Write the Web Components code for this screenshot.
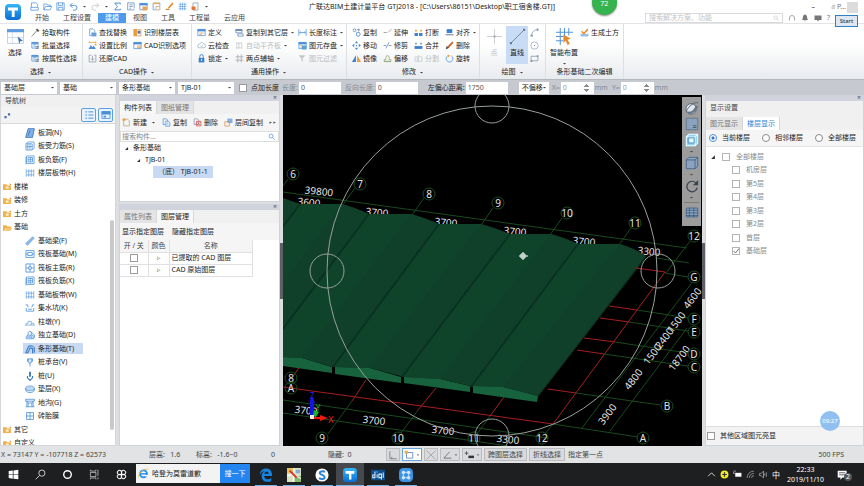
<!DOCTYPE html>
<html lang="zh-CN">
<head>
<meta charset="utf-8">
<title>广联达BIM土建计量平台 GTJ2018</title>
<style>
  html, body {
    margin: 0;
    height: 100%;
    overflow: hidden;
  }
  body {
    font: 7px/10px "Noto Sans", "Noto Sans CJK SC", sans-serif;
    color: #222;
    background: #f0f0f0;
  }
</style>
</head>
<body>
<gt-app></gt-app>

<script>
// Shared look of the native controls
const controls = `
  *, *::before, *::after { box-sizing: border-box; }
  button, input, select {
    font: inherit;
    color: inherit;
    margin: 0;
    padding: 0;
    border: 0;
    border-radius: 0;
    background: none;
    outline: none;
  }
  button { cursor: pointer; white-space: nowrap; }
  input[type=checkbox], input[type=radio] {
    appearance: none;
    flex: none;
    width: 8px;
    height: 8px;
    border: 1px solid #9a9a9a;
    background: #fff;
  }
  input[type=radio] { border-radius: 50%; border-color: #8a8a8a; }
  input[type=radio]:checked {
    border-color: #4a8fd8;
    background: radial-gradient(circle, #2f6fc0 0 1px, #fff 2px);
  }
  label { white-space: nowrap; }
  ul { list-style: none; margin: 0; padding: 0; }
`;

const B = '#4a8fd8';
const O = '#f09a35';
const s = (d, c = B, w = 1.3) => `<path d="${d}" fill="none" stroke="${c}" stroke-width="${w}"/>`;
const f = (d, c = B) => `<path d="${d}" fill="${c}"/>`;
const win = s('M1.5 2.5h13v11h-13z') + f('M1 2h14v4H1z');

const ICONS = {
  logo: `<defs><linearGradient id="g" x2="0" y2="1"><stop stop-color="#36b5f7"/><stop offset="1" stop-color="#0a6fd6"/></linearGradient></defs><rect width="16" height="16" rx="4" fill="url(#g)"/>` + f('M3 3.5h10v3H9.6V13H6.8V6.5H3z', '#fff'),
  caret: f('M3 6h10l-5 5z', '#444'),
  file: s('M2.5 1.5h8l3 3v4M2.5 1.5v8M1.5 9.5h13v5h-13z'),
  open: s('M1.5 14V3.5h5l1.5 2h5v3M1.5 14l3-6h11l-3 6z'),
  save: s('M1.5 1.5h13v13h-13zM4.5 1.5v5h7v-5M4 14.5v-5h8v5'),
  undo: s('M6 2L2 6l4 4M2 6h8a4 4 0 0 1 0 8.500H7', B, 1.6),
  redo: s('M10 2l4 4-4 4M14 6H6a4 4 0 0 0 0 8.500h3', '#c4c8ce', 1.6),
  sum: s('M13 4V2H3l5 6-5 6h10v-2', '#3f7fc8', 1.6),
  sheet: s('M3 1.500h11.500v10M3 1v13h12M6 5h6M6 8h6M6 11h3', '#5a86b8'),
  sheet2: win + f('M6 8h8v7H6z', '#e8a35a'),
  sheet3: s('M2 2h12v5M2 2v12h4') + f('M2 1h12v3H2z', '#e8b070') + s('M7 8h7v6H7z', '#c79a6a'),
  brush: f('M13 1l2 2-7 8-3 1 1-3z', '#e58a30') + f('M2 12c2 0 6 0 7 2H1z', '#c98844'),
  mesh: s('M1 4h14M1 8h14M1 12h14M4 1v14M8 1v14M12 1v14', B, 1),
  lockdoc: s('M3.500 1.500h9v13h-9z', '#8a9ab0') + f('M1 8h7v6H1z', '#e0762b'),
  find: s('M3 1.500h6l3 3V8M3 1.500v12h3') + f('M6 8h9v7H6z', '#6d9fd4'),
  pick: f('M11 1l4 4-2.500 2-4-4z', '#555') + s('M10 5l-7 8-2 2', '#777', 1.600),
  batch: s('M1.500 2.500h11v10h-11zM4 6h6M4 9h4') + f('M1 2h12v3H1z') + s('M8 10h6M8 13h6', '#6a6a6a'),
  floors: s('M2 3h12v11H2z', '#c88a50') + f('M1 2h6v12H1z', O) + f('M8 5h5v5H8z', '#4a7ab8'),
  ratio: s('M1 2.500h14M3 1v3M13 1v3', O) + f('M1 14l4-7 3 4 2-3 4 6z') + f('M12 5h3v3h-3z', O),
  opts: win + s('M7 9h7M7 12h7', '#d98030'),
  restore: s('M2 2h4M2 2v12h12V2h-3M5 8l3 3 3-3M8 3v8', '#8a94a0'),
  define: win + s('M4 9h8M4 12h5', '#e09040'),
  cloud: s('M4 12a3 3 0 0 1 0-6 4.500 4.500 0 0 1 8-1 3.500 3.500 0 0 1 0 7zM6 8l2 2 3-3', '#9db0c4'),
  lock: f('M3 7h10v8H3z', '#3b7fd0') + s('M5 7V4a3 3 0 0 1 6 0v3', '#3b7fd0', 1.600) + f('M7 9h2v3H7z', '#fff'),
  copyfloor: s('M1.500 3.500h11v5h-11zM5 10.500h9.500v4H5z', '#5d84b4') + f('M1 2h12v3H1z', '#5d84b4'),
  slab: s('M3 2v12M7 2v12M12 2v12M3 4h9M3 12h9', '#c4c8ce'),
  twopt: s('M5 1v14M11 1v14M1 5h14M1 11h14', '#9aa2ac'),
  dim: s('M1.500 2v12M14.500 2v12M3 8h10M5 6L3 8l2 2M11 6l2 2-2 2'),
  store: win + f('M7 8h8v7H7z', '#58a0d8') + s('M4 8h3M4 11h3', '#e09040'),
  filter: f('M1 2h12L8.500 8v6L6 12V8z', '#c4c8ce'),
  copy: '<circle cx="4.500" cy="4" r="2.500" fill="none" stroke="#5d84b4" stroke-width="1.400"/><circle cx="11" cy="11" r="3.500" fill="none" stroke="#4a8fd8" stroke-width="1.600"/>' + s('M9 3h5M12 1v5', '#5d84b4'),
  move: f('M8 0l3 4H5zM8 16l3-4H5zM0 8l4-3v6zM16 8l-4-3v6z') + f('M7 7h2v2H7z'),
  mirror: f('M7 2v12H0z', '#3b7fd0') + f('M9 2v12h7z', O),
  extend: s('M1 8h6M9 8l6-6', '#8a94a0', 1.400),
  trim: s('M1 8h5M10 8h5M5 13L11 2', '#6a8ab0', 1.400),
  offset: s('M2 13.500h12M5 10V6a3 3 0 0 1 6 0v4h3v3H2v-3z', '#8aa070', 1.300),
  break_: f('M1 9h6v5H1zM9 9h6v5H9z', '#3b7fd0') + f('M2 3h3v3H2zM11 3h3v3h-3z', O),
  merge: f('M1 9h14v5H1z', '#3b7fd0') + f('M2 3h3v3H2zM11 3h3v3h-3z', '#6d9fd4'),
  split: s('M2 5h4v8H2zM9 5h5v8H9M8 2v13', '#c4c8ce'),
  align: f('M3 2h10v7H3z', '#3b7fd0') + s('M1 12h14', '#7a8694', 2),
  del: f('M13 1l2 2-8 9-4 2 1-4z', '#c8642a') + f('M1 15l2-6 4 3z', '#555'),
  rotate: s('M5 3a6 6 0 1 0 6 0') + f('M5 1l4 2-4 3z', O),
  point: s('M8 1v14M1 8h14', '#c4c8ce', .800) + f('M7 7h2v2H7z', '#aaa'),
  line: s('M2 14L14 2', '#5a6f8c', .700) + f('M0.800 13.200h2v2h-2zM13.200 .800h2v2h-2z', '#6a7a90'),
  arc: s('M3 14C3 7 8 3 13 3', '#7d90a8') + f('M1 12h4v3H1zM12 1h3v4h-3z', '#7d90a8'),
  circle: '<circle cx="8" cy="8" r="6.500" fill="none" stroke="#7d90a8"/>' + f('M7 7h2v2H7z', '#7d90a8'),
  rect: s('M2 4h12v8H2z', '#7d90a8') + f('M1 11h3v3H1zM12 2h3v3h-3z', '#7d90a8'),
  smart: s('M0 4h16M0 8h10M0 12h7M4 0v16M8 0v9M12 0v7', B, .900) + f('M7 6l7 4-3 1 2 4-2 1-2-4-2 2z', '#e58a30'),
  earth: s('M2 10v4h12v-4M3 12h10') + f('M3 5l4 3 6-7 2 2-8 9-5-5z', '#e58a30'),
  select: s('M.500 1.500h15v13H.500z', '#9ab6d8', .600) + f('M0 1h16v3H0z', '#5b9be0') + s('M5 4v11M.500 9h15', '#bccadb', .600) + f('M10 8l5 4-2.500.500L11.500 15z', '#3b74b8'),
  bell: f('M8 1c4 1 4 4 4.500 8l1.500 3H2l1.500-3C4 5 4 2 8 1zM6 13h4l-2 2z', '#777'),
  headset: s('M3 13V8a5 5 0 0 1 10 0v5', '#aaa', 2),
  chat: f('M1 3h14v9h-5l-2 3-2-3H1z', '#777'),
  user: s('M3 15V9h8v6zM6 9V4h7v3', '#777'),
  search: s('M10.500 10.500L15 15M11.500 7a4.500 4.500 0 1 1-9 0 4.500 4.500 0 0 1 9 0z', 'currentColor', 1.400),
  plus2: f('M1 9h5v5H1zM9 3h5v5H9z', '#4a6fa8'),
  listview: s('M2 3h3M2 8h3M2 13h3M7 3h8M7 8h8M7 13h8', B, 1.500),
  tileview: s('M1.500 2.500h13v11h-13z') + f('M1 2h14v5H1zM4 9h4v3H4z'),
  folder: f('M0 4h6l2 2h6v8H0z', '#f3b04a') + f('M5 8h5v4H5z', '#fff2cf') + f('M12 2l3 3-3 1z', '#d98b30'),
  folderopen: f('M0 4h6l2 2h6v3H5l-3 5H0z', '#f3b04a') + f('M6 9h10l-3 5H3z', '#f7c873'),
  hole: f('M5 1h10l-3 14H1z', '#7fb0e6') + s('M5 1h10l-3 14H1zM8 4L5 12', '#3b74b8'),
  plate: s('M1.500 4.500h10v10h-10zM1.500 4.500l3-3h10v10l-3 3M4.500 4v10M8 4v10M1.500 9h10', B, 1.200),
  net: s('M2.500 1.500h12v12h-12zM1.500 15V3M5 4h7v7H5zM8.500 4v7M5 7.500h7', B, 1.200),
  strip: s('M2 2v12M6 2v12M10 2v12M14 2v12M2 5h12M2 11h12', B, 1),
  beam: f('M1 12L12 1l3 2L4 15z', '#8dbbea') + s('M1 12L12 1l3 2L4 15z', '#5b97d6', .800),
  raft: s('M1.500 2.500h13v11h-13zM4.500 5.500h7v5h-7zM1.500 8h3M11.500 8h3'),
  rebar: s('M1.500 1.500h13v13h-13zM8 2v4M8 10v4M2 8h4M10 8h4M6 6h4v4H6z'),
  sump: s('M1 3h3M12 3h3M4 3l1 4M12 3l-1 4M2 8v5h12V8M5 10h6'),
  pier: s('M0 13h16M2 13v-3h3V7h5v6M10 10h4v3', '#6da4dc', 1.200),
  found: s('M2 14h11V9l-3-1V3L7 2 5 4v4L2 10zM5 8l5 1v5M13 14l2-2V8l-5-5') + f('M2 10l8-1v5H2z', '#9cc4ec'),
  stripf: f('M1 14l4-11h6l4 4v7l-3 1V8H8l-3 6z', '#8fbbe8') + s('M1 14l5-11h6l3 3v8M5 14l3-7h4v8M1 14h4', '#2f6ab8'),
  cap: s('M8 15V9M4 3h8v4l-4 3-4-3zM6 3v5M10 3v5', B),
  pile: s('M8 1v8', '#3b74c8', 3) + s('M4 8v3l4 4 4-4V8', '#3b74c8', 1.800),
  pad: '<ellipse cx="8" cy="7" rx="7" ry="4" fill="#b9d7f3" stroke="#4a8fd8"/>' + s('M1 7v3c2 5 12 5 14 0V7'),
  ditch: s('M1 2h14v3H1zM3 5v9M13 5v9M5 14V8h6v6M1 14h14M5 8l-2-3M11 8l2-3'),
  brick: s('M2.500 2.500h11v11h-11zM8 2v12M2 8h12'),
  newdoc: s('M3 2h7l3 3v9H3z', '#b0a080') + f('M1 1h5v4H1z', O),
  copydoc: s('M2 1.500h6l2 2v8H2zM6 5.500h5l3 3v6H6z') + f('M6 6h5v8H6z', '#b9d7f3'),
  deldoc: s('M2 1.500h6l2 2v8H2z', '#8a94a0') + s('M6 6h8v8H6zM8 8l4 4M12 8l-4 4', '#d24a4a', 1.400),
  layercopy: f('M6 1h9v8H6z', '#7fb0e6') + s('M1.500 6.500h8v8h-8z', '#e09040'),
  more: f('M1 6l4 2-4 2zM8 6l4 2-4 2z', '#444'),
  expanded: f('M13 3v10H3z', '#333'),
  orbit: '<circle cx="7" cy="9" r="6" fill="#dfe6ee" stroke="#53606e"/>' + f('M3 12c5 1 8-3 9-7l3 1c-1 5-6 9-11 9z', '#65768a') + s('M2 13C0 10 10 0 15 2', '#4c5a6a', 1),
  plan: s('M1.500 1.500h13v13h-13z', '#506a8a', 1) + f('M2 2h12v12H2z', '#8ba3be') + s('M9 10h4M9 12h4', '#344', .800),
  cube: f('M1 4l3-3h11v11l-3 3H1z', '#8fd4f5') + s('M1.500 4.500h10v10h-10zM1.500 4.500l3-3h10v10l-3 3M11.500 4.500l3-3', '#e9faff', 1.200) + f('M5 6h5v5H5z', '#e6f6ff') + s('M3.500 5.500h7v6h-7z', '#3f7ea6', .800),
  box: f('M1 4l3-3h11v11l-3 3H1z', '#8ba3be') + s('M1.500 4.500h10v10h-10zM1.500 4.500l3-3h10v10l-3 3M11.500 4.500l3-3', '#3d5a80', .900),
  orbit2: s('M13 5a6 6 0 1 0 1 5', '#36424e', 1.400) + f('M15 1v6H9z', '#36424e'),
  table: f('M1 3h14v11H1z', '#8ba3be') + s('M1.500 3.500h13v10h-13zM5 3v11M10 3v11M1 6h14M1 9h14M1 12h14', '#3d5a80', .900),
  corner: s('M3 2v12h11M6 14v-3', '#777'),
  snaprect: s('M4 4h10v9H4z', '#5b83b8') + f('M1 1h5v5H1z', '#e7b23c'),
  cross: s('M1 1l14 14M15 1L1 15', '#888', .900),
  angle: s('M12 3L3 13h12', '#666'),
  plusbar: s('M1 5h6M4 2v6', '#444') + f('M7 9h9v4H7z', '#333'),
  windows: f('M1 3l6-1v5.500H1zM8 2l7-1v6.500H8zM1 8.500h6V14l-6-1zM8 8.500h7V15l-7-1z', '#fff'),
  finder: s('M6.500 9.500L1 15M14.500 6a4.500 4.500 0 1 1-9 0 4.500 4.500 0 0 1 9 0z', '#e8e8e8', 1.200),
  cortana: '<circle cx="8" cy="8" r="5.500" fill="none" stroke="#fff" stroke-width="2"/>',
  taskview: s('M2 5h8v6H2zM2 1v2h8V1M2 15v-2h8v2M13 1v9M13 12v3', '#ddd', 1),
  fan: s('M8 8C2 9 0 5 4 2c3-1 5 2 4 6zM8 8c-1-6 3-8 6-4 1 3-2 5-6 4zM8 8c6-1 8 3 4 6-3 1-5-2-4-6zM8 8c1 6-3 8-6 4-1-3 2-5 6-4z', '#fff', 1.500),
  ie: '<circle cx="8" cy="8.500" r="5" fill="none" stroke="#1e8fe6" stroke-width="2.600"/>' + f('M3 7.500h10v2H3z', '#1e8fe6') + f('M10 10.200h5v2h-5z', '#fff') + s('M1 14C-1 9 9-1 15 2', '#f0b93a', 1.200),
  edge: f('M1 8C1 3 4 .500 8.500.500S15 4 15 9H6c0 4 5 5 8 2.500V15c-5 2-11 .500-11-6 0-3 2-5 4-6-3 .500-5 2.500-6 5zm5-1.500h5c0-3-4-3-5 0z', '#1683dd'),
  map: f('M0 0h16v16H0z', '#d9e3c4') + f('M0 0h7v6H0z', '#e6c05a') + f('M9 9h7v7H9z', '#86b870') + s('M0 9l7-2 9 5M8 0l-1 16', '#fff', 1.200) + s('M3 3l8 8', '#d8352c', 2.400) + f('M10 2h5v4h-5z', '#8aa8dc'),
  sogou: '<circle cx="8" cy="8" r="7.500" fill="#fff"/>' + s('M11.500 4.500C9 3 5 4 5.500 6S11 8 11 10.500 7 13 4.500 11.500', '#2a84d8', 2.200),
  dia: f('M0 2h16v12H0z', '#0e4e8c') + s('M4.500 4v7H2V8h2.500M7 7v4M7 4v1M9 11V7h3v4zM12 11v2M14 5v6', '#d6ebff', 1.200),
  snow: '<rect width="16" height="16" rx="5" fill="#3b93e4"/>' + s('M5 5h6v6H5z', '#cfe6ff', 1) + '<circle cx="5" cy="5" r="2" fill="#cfe6ff"/><circle cx="11" cy="5" r="2" fill="#cfe6ff"/><circle cx="5" cy="11" r="2" fill="#cfe6ff"/><circle cx="11" cy="11" r="2" fill="#cfe6ff"/>',
  up: s('M2 11l6-6 6 6', '#fff', 1.400),
  guard: '<circle cx="8" cy="8" r="7" fill="#f4ea2a"/>' + s('M8 4v8M4 8h8', '#333', 2.200),
  battery: f('M4 5h11v7H4z', '#fff') + s('M1 3v3h3M2 1v2M4 1v2', '#fff', 1),
  wifi: s('M2 14A12 12 0 0 1 14 2M6 14a8 8 0 0 1 8-8M10 14a4 4 0 0 1 4-4', '#bbb', 1.200),
  sound: s('M1 6h3l4-4v12l-4-4H1zM10 6v4M13 4v8', '#ddd', 1),
  tick: s('M3 8l4 4 7-9', '#777', 2),
  notice: f('M1 1h13v10H8l-3 3v-3H1z', '#fff') + s('M3 4h9M3 7h9', '#222', 1)
};

class GtIcon extends HTMLElement {
  constructor() {
    super();
    this.attachShadow({ mode: 'open' });
  }

  connectedCallback() {
    this.shadowRoot.innerHTML = `
      <style>
        :host { display: block; flex: none; width: var(--icon, 9px); height: var(--icon, 9px); }
        svg { display: block; width: 100%; height: 100%; }
      </style>
      <svg viewBox="0 0 16 16" aria-hidden="true">${ICONS[this.getAttribute('name')] || ''}</svg>
    `;
  }
}
customElements.define('gt-icon', GtIcon);

const caret = '<gt-icon class="caret" name="caret"></gt-icon>';

class GtHeader extends HTMLElement {
  constructor() {
    super();
    this.attachShadow({ mode: 'open' });
  }

  connectedCallback() {
    const quick = ['file', 'open', 'save', 'undo', '', 'redo', '', 'sum', 'sheet', 'sheet2', 'sheet3', 'brush', 'mesh', 'lockdoc', ''];
    const tabs = ['开始', '工程设置', '建模', '视图', '工具', '工程量', '云应用'];
    this.shadowRoot.innerHTML = `
      <style>
        ${controls}
        :host {
          display: grid;
          position: relative;
          grid-template: 13px 10px / 1fr auto 1fr;
          background: #fff;
        }
        .logo { --icon: 16px; grid-area: 1 / 1 / 3 / 2; margin: 4px 0 0 5px; }
        .quick { grid-area: 1 / 1; display: flex; align-items: center; gap: 4px; padding-left: 30px; }
        .quick button { display: block; }
        .caret { --icon: 5px; }
        h1 { grid-area: 1 / 2; margin: 0; font: inherit; line-height: 13px; }
        .window { grid-area: 1 / 3; display: flex; justify-content: flex-end; align-items: center; gap: 1px; padding-right: 6px; color: #777; --icon: 5px; }
        .window button { padding: 0 15px; color: #333; }
        .avatar { width: 11px; height: 11px; background: #dcdcdc; margin-top: 2px; }
        .tabs { grid-area: 2 / 1 / 3 / 4; display: flex; padding-left: 28px; }
        .tabs button { padding: 0 7px; color: #444; }
        .tabs .on { background: #4d9bea; color: #fff; }
        .help { grid-area: 2 / 3; display: flex; justify-content: flex-end; align-items: center; gap: 5px; padding-right: 6px; color: #777; --icon: 8px; z-index: 1; }
        .find { display: flex; align-items: center; width: 138px; height: 10px; padding: 0 3px; border: 1px solid #dadada; color: #bbb; --icon: 6px; }
        .find input { flex: 1; min-width: 0; height: 8px; }
        .find input::placeholder { color: #c4c4c4; }
        .start { align-self: start; height: 12px; width: 23px; margin-top: 2px; border: 1px solid #2f7fc4; background: #dfe7f0; color: #222; font-size: 6px; }
        .score { position: absolute; left: calc(70% - 13px); top: -10px; width: 25px; height: 25px; border-radius: 50%; background: #35b34f; box-shadow: 0 1px 2px #888; color: #fff; text-align: center; line-height: 28px; }
      </style>
      <gt-icon class="logo" name="logo"></gt-icon>
      <div class="quick">${quick.map(n => n ? `<button aria-label="${n}"><gt-icon name="${n}"></gt-icon></button>` : caret).join('')}</div>
      <h1>广联达BIM土建计量平台 GTJ2018 - [C:\\Users\\86151\\Desktop\\职工宿舍楼.GTJ]</h1>
      <div class="window"><button>–</button><gt-icon name="user"></gt-icon><span>P...</span><span class="avatar"></span></div>
      <nav class="tabs">${tabs.map(t => `<button class="${t === '建模' ? 'on' : ''}">${t}</button>`).join('')}</nav>
      <div class="help">
        <div class="find"><input aria-label="搜索" placeholder="搜索解决方案、功能"><gt-icon name="search"></gt-icon></div>
        <gt-icon name="headset"></gt-icon><gt-icon name="bell"></gt-icon><gt-icon name="chat"></gt-icon>
        <span>?</span><button class="start">Start</button>
      </div>
      <span class="score">72</span>
    `;
  }
}
customElements.define('gt-header', GtHeader);

// One ribbon button: icon on the left, or on top with the "large" attribute
class GtCommand extends HTMLElement {
  constructor() {
    super();
    this.attachShadow({ mode: 'open' });
  }

  connectedCallback() {
    this.shadowRoot.innerHTML = `
      <style>
        ${controls}
        :host { display: block; }
        button { display: flex; align-items: center; gap: 2px; height: 13px; color: #222; }
        .caret { --icon: 5px; margin-right: -3px; }
        :host([off]) button { color: #b9bcc0; }
        :host([large]) { --icon: 17px; }
        :host([large]) button { flex-direction: column; gap: 3px; min-width: 20px; height: 38px; padding-top: 2px; }
        :host([large]) .caret { margin-right: 0; }
        :host([active]) button { background: #c9dcf5; min-width: 22px; }
        slot { display: block; }
      </style>
      <button><gt-icon name="${this.getAttribute('icon')}"></gt-icon><slot></slot>${this.hasAttribute('menu') ? caret : ''}</button>
    `;
  }
}
customElements.define('gt-command', GtCommand);

class GtRibbonGroup extends HTMLElement {
  constructor() {
    super();
    this.attachShadow({ mode: 'open' });
  }

  connectedCallback() {
    this.shadowRoot.innerHTML = `
      <style>
        :host { display: flex; flex-direction: column; padding: 2px 5px 0; border-right: 1px solid #dcdfe3; }
        :host([tight]) { padding: 2px 4px 0; }
        .commands { display: grid; grid-template-rows: repeat(3, 13px); grid-auto-flow: column; column-gap: 6px; }
        :host([tight]) .commands { column-gap: 2px; }
        ::slotted([large]) { grid-row: span 3; }
        footer { display: flex; align-items: center; justify-content: center; gap: 3px; height: 14px; white-space: nowrap; }
        .caret { --icon: 5px; }
      </style>
      <div class="commands"><slot></slot></div>
      <footer>${this.getAttribute('label')}${this.hasAttribute('plain') ? '' : caret}</footer>
    `;
  }
}
customElements.define('gt-ribbon-group', GtRibbonGroup);

class GtRibbon extends HTMLElement {
  constructor() {
    super();
    this.attachShadow({ mode: 'open' });
  }

  connectedCallback() {
    this.shadowRoot.innerHTML = `
      <style>
        :host {
          display: flex;
          box-sizing: border-box;
          height: 56px;
          border-top: 1px solid #e2e4e8;
          background: linear-gradient(#fff 35%, #e8ebee);
        }
      </style>
      <gt-ribbon-group label="选择">
        <gt-command large icon="select">选择</gt-command>
        <gt-command icon="pick">拾取构件</gt-command>
        <gt-command icon="batch">批量选择</gt-command>
        <gt-command icon="batch">按属性选择</gt-command>
      </gt-ribbon-group>
      <gt-ribbon-group label="CAD操作">
        <gt-command icon="find">查找替换</gt-command>
        <gt-command icon="ratio">设置比例</gt-command>
        <gt-command icon="restore">还原CAD</gt-command>
        <gt-command icon="floors">识别楼层表</gt-command>
        <gt-command icon="opts">CAD识别选项</gt-command>
      </gt-ribbon-group>
      <gt-ribbon-group label="通用操作">
        <gt-command icon="define">定义</gt-command>
        <gt-command icon="cloud">云检查</gt-command>
        <gt-command icon="lock" menu>锁定</gt-command>
        <gt-command icon="copyfloor" menu>复制到其它层</gt-command>
        <gt-command icon="slab" off menu>自动平齐板</gt-command>
        <gt-command icon="twopt" menu>两点辅轴</gt-command>
        <gt-command icon="dim" menu>长度标注</gt-command>
        <gt-command icon="store" menu>图元存盘</gt-command>
        <gt-command icon="filter" off>图元过滤</gt-command>
      </gt-ribbon-group>
      <gt-ribbon-group label="修改">
        <gt-command icon="copy">复制</gt-command>
        <gt-command icon="move">移动</gt-command>
        <gt-command icon="mirror">镜像</gt-command>
        <gt-command icon="extend">延伸</gt-command>
        <gt-command icon="trim">修剪</gt-command>
        <gt-command icon="offset">偏移</gt-command>
        <gt-command icon="break_">打断</gt-command>
        <gt-command icon="merge">合并</gt-command>
        <gt-command icon="split" off>分割</gt-command>
        <gt-command icon="align" menu>对齐</gt-command>
        <gt-command icon="del">删除</gt-command>
        <gt-command icon="rotate">旋转</gt-command>
      </gt-ribbon-group>
      <gt-ribbon-group label="绘图" tight>
        <gt-command large off icon="point">点</gt-command>
        <gt-command large active icon="line">直线</gt-command>
        <gt-command icon="arc"></gt-command>
        <gt-command icon="circle"></gt-command>
        <gt-command icon="rect"></gt-command>
      </gt-ribbon-group>
      <gt-ribbon-group label="条形基础二次编辑" tight plain>
        <gt-command large icon="smart" menu>智能布置</gt-command>
        <gt-command icon="earth">生成土方</gt-command>
      </gt-ribbon-group>
    `;
  }
}
customElements.define('gt-ribbon', GtRibbon);

class GtOptionsBar extends HTMLElement {
  constructor() {
    super();
    this.attachShadow({ mode: 'open' });
  }

  connectedCallback() {
    const picks = ['基础层', '基础', '条形基础', 'TJB-01'];
    this.shadowRoot.innerHTML = `
      <style>
        ${controls}
        :host { display: flex; box-sizing: border-box; align-items: center; height: 16px; padding: 0 1px; background: #c6c9d0; border-top: 1px solid #b4b7be; color: #858990; }
        .pick { display: grid; align-items: center; width: 56px; margin-right: 3px; color: #222; }
        .pick select { grid-area: 1 / 1; appearance: none; height: 12px; padding-left: 3px; background: #fff; }
        .pick gt-icon { grid-area: 1 / 1; justify-self: end; margin-right: 2px; --icon: 5px; pointer-events: none; }
        .short { width: 30px; margin-left: 7px; }
        label { display: flex; align-items: center; gap: 1px; }
        label input:not([type=checkbox]) { width: 42px; height: 12px; padding-left: 2px; background: #fff; color: #555; margin-right: 4px; }
        .dark { color: #222; gap: 4px; margin: 0 3px 0 2px; }
        .far { margin-left: 6px; color: #222; }
        label input[type=number] { width: 33px; margin-right: 1px; color: #999; }
        .mm { margin-right: 4px; }
        input::-webkit-inner-spin-button { opacity: 1; height: 10px; width: 8px; }
      </style>
      ${picks.map(p => `<span class="pick"><select aria-label="${p}"><option>${p}</option></select><gt-icon name="caret"></gt-icon></span>`).join('')}
      <label class="dark"><input type="checkbox">点加长度</label>
      <label>长度:<input value="0"></label>
      <label>反向长度:<input value="0"></label>
      <label class="far">左偏心距离:<input value="1750"></label>
      <span class="pick short"><select aria-label="偏移方式"><option>不偏移</option></select><gt-icon name="caret"></gt-icon></span>
      <label>X=<input type="number" value="0"></label><span class="mm">mm</span>
      <label>Y=<input type="number" value="0"></label><span class="mm">mm</span>
    `;
  }
}
customElements.define('gt-options-bar', GtOptionsBar);

class GtNavTree extends HTMLElement {
  constructor() {
    super();
    this.attachShadow({ mode: 'open' });
  }

  connectedCallback() {
    const rows = [
      ['hole', '板洞(N)'], ['plate', '板受力筋(S)'], ['net', '板负筋(F)'], ['strip', '楼层板带(H)'],
      ['folder', '楼梯'], ['folder', '装修'], ['folder', '土方'], ['folderopen', '基础'],
      ['beam', '基础梁(F)'], ['raft', '筏板基础(M)'], ['rebar', '筏板主筋(R)'], ['net', '筏板负筋(X)'],
      ['strip', '基础板带(W)'], ['sump', '集水坑(K)'], ['pier', '柱墩(Y)'], ['found', '独立基础(D)'],
      ['stripf', '条形基础(T)'], ['cap', '桩承台(V)'], ['pile', '桩(U)'], ['pad', '垫层(X)'],
      ['ditch', '地沟(G)'], ['brick', '砖胎膜'], ['folder', '其它'], ['folder', '自定义']
    ];
    this.shadowRoot.innerHTML = `
      <style>
        ${controls}
        :host { display: flex; flex-direction: column; min-height: 0; background: #fff; border: 1px solid #d4d6da; border-top: 0; }
        h2 { margin: 0; font: inherit; line-height: 12px; padding-left: 4px; background: #f0f0f0; color: #444; }
        .bar { display: flex; align-items: center; gap: 2px; height: 17px; padding: 0 2px 0 3px; background: #f3f3f3; border-bottom: 1px solid #dadada; }
        .bar span { flex: 1; --icon: 7px; }
        .bar button { display: grid; place-items: center; width: 15px; height: 14px; border: 1px solid #5ba0e4; border-radius: 2px; background: #e9f3fd; --icon: 10px; }
        .view { flex: 1; min-height: 0; display: flex; overflow: hidden; }
        /* the last row runs past the lower edge of the view */
        ul { flex: 1; display: flex; flex-direction: column; margin: 2px 0 -5px; }
        li { flex: 1; display: flex; align-items: center; padding-left: 2px; }
        li span { display: flex; align-items: center; gap: 2px; height: 11px; white-space: nowrap; }
        li.leaf { padding-left: 22px; }
        li.leaf span { width: 60px; gap: 3px; padding-left: 2px; --icon: 10px; }
        li.on span { background: #c8daf3; }
        .thumb { width: 4px; margin: 96px 1px 15px 0; border-radius: 2px; background: #c9c9c9; }
      </style>
      <h2>导航树</h2>
      <div class="bar">
        <span><gt-icon name="plus2"></gt-icon></span>
        <button aria-label="列表"><gt-icon name="listview"></gt-icon></button>
        <button aria-label="平铺"><gt-icon name="tileview"></gt-icon></button>
      </div>
      <div class="view">
        <ul role="tree">${rows.map(([i, t]) => `<li role="treeitem" class="${i.startsWith('folder') ? '' : 'leaf'} ${i === 'stripf' ? 'on' : ''}"><span><gt-icon name="${i}"></gt-icon>${t}</span></li>`).join('')}</ul>
        <div class="thumb"></div>
      </div>
    `;
  }
}
customElements.define('gt-nav-tree', GtNavTree);

// Docked panel with a close strip and tabs; "on" is the index of the open tab
class GtPanel extends HTMLElement {
  constructor() {
    super();
    this.attachShadow({ mode: 'open' });
  }

  connectedCallback() {
    const on = Number(this.getAttribute('on'));
    const heading = this.getAttribute('heading');
    this.shadowRoot.innerHTML = `
      <style>
        ${controls}
        :host { display: flex; flex-direction: column; min-height: 0; background: #fff; border: 1px solid #cfd2d8; border-top: 0; }
        .strip { display: flex; justify-content: flex-end; height: 6px; background: #d0d3db; }
        .strip button { line-height: 6px; padding: 0 2px; color: #555; }
        h2 { margin: 0; font: inherit; line-height: 14px; padding: 0 4px 2px; background: #f0f0f0; color: #444; }
        .tabs { display: flex; background: #f0f0f0; }
        .tabs button { height: 13px; padding: 0 4px; color: #777; background: #e4e4e4; border-right: 1px solid #d8d8d8; }
        .tabs .on { background: #f7f7f7; color: #222; }
        :host([heading]) .on { background: #fff; color: #2f86d6; }
      </style>
      <div class="strip"><button aria-label="关闭">×</button></div>
      ${heading ? `<h2>${heading}</h2>` : ''}
      <div class="tabs">${this.getAttribute('tabs').split(',').map((t, i) => `<button class="${i === on ? 'on' : ''}">${t}</button>`).join('')}</div>
      <slot></slot>
    `;
  }
}
customElements.define('gt-panel', GtPanel);

class GtComponentList extends HTMLElement {
  constructor() {
    super();
    this.attachShadow({ mode: 'open' });
  }

  connectedCallback() {
    this.shadowRoot.innerHTML = `
      <style>
        ${controls}
        :host { display: block; height: 87px; }
        .bar { display: flex; align-items: center; justify-content: space-between; height: 17px; padding: 0 1px 0 2px; background: #f5f5f5; }
        .bar button { display: flex; align-items: center; gap: 2px; }
        .caret { --icon: 5px; margin-left: 2px; }
        .find { display: flex; align-items: center; height: 11px; padding: 0 3px 0 1px; border: 1px solid #ddd; color: #3b7fd0; --icon: 7px; }
        .find input { flex: 1; min-width: 0; }
        .find input::placeholder { color: #888; }
        ul { --icon: 5px; }
        li { display: flex; align-items: center; gap: 4px; height: 12px; padding-left: 4px; }
        li + li { padding-left: 16px; }
        li + li + li { padding-left: 33px; }
        b { font-weight: normal; line-height: 12px; padding: 0 5px; background: #c8daf3; }
      </style>
      <div class="bar">
        <button><gt-icon name="newdoc"></gt-icon>新建${caret}</button>
        <button><gt-icon name="copydoc"></gt-icon>复制</button>
        <button><gt-icon name="deldoc"></gt-icon>删除</button>
        <button><gt-icon name="layercopy"></gt-icon>层间复制</button>
        <button aria-label="更多"><gt-icon name="more"></gt-icon></button>
      </div>
      <div class="find"><input aria-label="搜索构件" placeholder="搜索构件..."><gt-icon name="search"></gt-icon></div>
      <ul role="tree">
        <li role="treeitem"><gt-icon name="expanded"></gt-icon>条形基础</li>
        <li role="treeitem"><gt-icon name="expanded"></gt-icon>TJB-01</li>
        <li role="treeitem"><b>（底） TJB-01-1</b></li>
      </ul>
    `;
  }
}
customElements.define('gt-component-list', GtComponentList);

class GtLayerList extends HTMLElement {
  constructor() {
    super();
    this.attachShadow({ mode: 'open' });
  }

  connectedCallback() {
    const layers = ['已提取的 CAD 图层', 'CAD 原始图层'];
    this.shadowRoot.innerHTML = `
      <style>
        ${controls}
        :host { display: block; }
        .bar { display: flex; gap: 8px; height: 17px; padding-left: 2px; background: #f5f5f5; }
        table { width: 133px; border-collapse: collapse; table-layout: fixed; }
        th, td { height: 12px; padding: 0; border: 1px solid #e0e0e0; border-left: 0; border-top: 0; font-weight: normal; text-align: center; white-space: nowrap; }
        th { background: #f5f5f5; color: #444; }
        td:last-child { text-align: left; padding-left: 2px; }
        td input { display: block; margin: 0 auto; }
        .c1 { width: 28px; }
        .c2 { width: 21px; }
        td:nth-child(2) { color: #777; }
      </style>
      <div class="bar"><button>显示指定图层</button><button>隐藏指定图层</button></div>
      <table>
        <tr><th class="c1">开 / 关</th><th class="c2">颜色</th><th>名称</th></tr>
        ${layers.map(l => `<tr><td><input type="checkbox" aria-label="${l}"></td><td>▹</td><td>${l}</td></tr>`).join('')}
      </table>
    `;
  }
}
customElements.define('gt-layer-list', GtLayerList);

class GtModelView extends HTMLElement {
  constructor() {
    super();
    this.attachShadow({ mode: 'open' });
  }

  connectedCallback() {
    const bubbles = [
      ['6', 293, 174], ['7', 360, 184], ['8', 429, 194], ['9', 498, 203], ['10', 567, 213], ['11', 635, 223],
      ['12', 694, 236], ['G', 694, 277], ['F', 694, 319], ['E', 694, 332], ['D', 694, 354], ['C', 694, 367],
      ['B', 667, 406], ['A', 643, 438], ['8', 291, 378], ['A', 291, 388], ['9', 322, 438], ['10', 398, 438],
      ['11', 474, 438], ['12', 542, 438]
    ];
    // text, centre, angle
    const backDims = [
      ['39800', 319, 191, 6], ['3600', 309, 202, 6], ['3700', 377, 212, 6], ['3700', 446, 222, 6],
      ['3700', 515, 231, 6], ['3700', 584, 241, 6], ['3300', 649, 251, 6]
    ];
    const frontDims = [
      ['3700', 306, 410, 6], ['3700', 374, 420, 6], ['3700', 443, 430, 6], ['3300', 508, 439, 6],
      ['3900', 607, 414, -53], ['4800', 633, 379, -53], ['1500', 652, 354, -53], ['2400', 664, 338, -53],
      ['1500', 676, 322, -53], ['4600', 692, 298, -53], ['18700', 679, 358, -53]
    ];
    const dim = ([t, x, y, a]) => `<text x="${x}" y="${y}" dy="4" transform="rotate(${a} ${x} ${y})">${t}</text>`;
    const tools = ['orbit', 'plan', 'cube', '', 'box', '', 'orbit2', '', '-', 'table'];
    this.shadowRoot.innerHTML = `
      <style>
        ${controls}
        :host { display: block; position: relative; min-width: 0; min-height: 0; overflow: hidden; background: #000; }
        svg { display: block; width: 100%; height: 100%; }
        text { font-size: 10px; fill: #e4e4e4; text-anchor: middle; }
        .bubble { fill: none; stroke: #1b4d21; }
        .axis { fill: none; stroke: #184a1e; }
        .grid { fill: none; stroke: #a51f1f; }
        .orbit { fill: none; stroke: #98a09a; }
        .tools { position: absolute; top: 2px; right: 1px; width: 19px; padding: 4px 0 7px; display: flex; flex-direction: column; align-items: center; gap: 2px; background: #9c9c9c; --icon: 14px; }
        .tools .caret { --icon: 5px; }
        hr { width: 15px; margin: 0; border: 0; border-top: 1px solid #7c7c7c; }
      </style>
      <svg viewBox="283 95 419 351" preserveAspectRatio="xMidYMid slice">
        <path class="axis" d="M283 192L687 248M288 179l-5 7M355 188l-13 18M424 198l-12 17M493 208l-12 17M562 218l-12 17M631 228l-12 17M690 241l-24 32M657 258l32 5"/>
        ${backDims.map(dim).join('')}
        <path fill="#103f2a" d="M283 198l17 6 42 0q12 3 27 10l42 0q12 3 28 10l42 0q12 3 29 10l41 0q12 3 27 10l42 0q12 3 26 12L538 396 503 387 471 386 440 379 404 377 370 368 333 367 302 358 283 357z"/>
        <path fill="#11482c" d="M283 226l17-22h42l-59 79zM283 329l86-115h42L302 358l-19-1zM333 367l106-143h42L370 368zM402 377l108-143h41L440 379zM471 387l107-143h42L503 387z" opacity=".6"/>
        <path fill="none" stroke="#0a3220" stroke-width="2" d="M300 204l-17 23M369 214l-86 115M439 224L333 367M510 234L402 377M578 244L471 387"/>
        <path fill="none" stroke="#0c3822" d="M646 257L538 396"/>
        <path fill="#17633e" d="M283 357l19 1 30 9v6l-49-7zM335 367l35 1 31 9v6l-66-9zM404 377l36 2 30 7v6l-66-9zM473 386l30 1 35 9-1 6-64-9z"/>
        <path class="grid" d="M283 387l270 37 112-152-29-4M609 306l28 4M600 318l29 4M584 338l31 4M577 350l27 4M548 389l28 4M299 368l-6 8M366 380l-14 21M436 388l-18 22M504 397l-14 19"/>
        <path class="axis" d="M553 424l85 13M576 393l84 12M604 354l84 12M615 342l73 11M629 322l59 9M637 310l51 8M665 273l23 4M283 400l265 38M283 413l225 33M352 401l-24 33M418 410l-17 23M490 416l-13 18M553 424l-8 10M582 428l109-144M610 431l77-103"/>
        ${frontDims.map(dim).join('')}
        ${bubbles.map(([t, x, y]) => `<circle class="bubble" cx="${x}" cy="${y}" r="6"/><text x="${x}" y="${y}" dy="4">${t}</text>`).join('')}
        <g class="orbit">
          <circle cx="492" cy="271" r="165"/>
          <circle cx="492" cy="106" r="17"/>
          <circle cx="492" cy="436" r="17"/>
          <circle cx="327" cy="271" r="17"/>
          <circle cx="658" cy="271" r="17"/>
        </g>
        <path fill="#1414e6" d="M310 417v-14h-1l3-7 3 7h-1v14z"/>
        <path fill="#16b52a" d="M313 416l1-6 5 2-3 5z"/>
        <path fill="#f01a10" d="M314 417h6v-2l8 3-8 3v-2h-6z"/>
        <path fill="#eee" d="M310 415h4v4h-4z"/>
        <text x="312" y="399" style="fill:#2222e8;font-size:8px">Z</text>
        <text x="318" y="411" style="fill:#18b82c;font-size:8px">Y</text>
        <text x="331" y="423" style="fill:#f01a10;font-size:9px">X</text>
        <path fill="none" stroke="#fff" d="M519 256h9M523 252v8M521 254h4v4h-4z"/>
      </svg>
      <div class="tools">${tools.map(n => n === '-' ? '<hr>' : n ? `<button aria-label="${n}"><gt-icon name="${n}"></gt-icon></button>` : caret).join('')}</div>
    `;
  }
}
customElements.define('gt-model-view', GtModelView);

class GtDisplaySettings extends HTMLElement {
  constructor() {
    super();
    this.attachShadow({ mode: 'open' });
  }

  connectedCallback() {
    const floors = ['机房层', '第5层', '第4层', '第3层', '第2层', '首层', '基础层'];
    this.shadowRoot.innerHTML = `
      <style>
        ${controls}
        :host { position: relative; flex: 1; display: flex; flex-direction: column; min-height: 0; }
        label { display: flex; align-items: center; gap: 5px; }
        .scope { display: flex; gap: 12px; height: 17px; padding-left: 3px; background: #f5f5f5; border-bottom: 1px solid #e4e4e4; }
        .tree { display: grid; grid-auto-rows: 1fr; height: 108px; margin-top: 3px; padding-left: 26px; color: #888; }
        .tree label { gap: 6px; }
        .tree label:first-child { margin-left: -22px; --icon: 6px; }
        .tree input { border-color: #b4b4b4; }
        .box { display: grid; --icon: 8px; }
        .box > * { grid-area: 1 / 1; }
        .box gt-icon { display: none; pointer-events: none; }
        .box :checked + gt-icon { display: block; }
        .other { margin-top: auto; height: 19px; padding-left: 1px; background: #f3f3f3; border-top: 1px solid #ddd; }
        .timer { position: absolute; right: 23px; bottom: 14px; width: 20px; height: 20px; border-radius: 50%; background: #8fc0f0; color: #fff; font-size: 6px; line-height: 20px; text-align: center; }
      </style>
      <div class="scope">
        <label><input type="radio" name="scope" checked>当前楼层</label>
        <label><input type="radio" name="scope">相邻楼层</label>
        <label><input type="radio" name="scope">全部楼层</label>
      </div>
      <div class="tree">
        <label><gt-icon name="expanded"></gt-icon><input type="checkbox">全部楼层</label>
        ${floors.map(t => `<label><span class="box"><input type="checkbox" ${t === '基础层' ? 'checked' : ''}><gt-icon name="tick"></gt-icon></span>${t}</label>`).join('')}
      </div>
      <label class="other"><input type="checkbox">其他区域图元亮显</label>
      <span class="timer">09:27</span>
    `;
  }
}
customElements.define('gt-display-settings', GtDisplaySettings);

class GtStatusBar extends HTMLElement {
  constructor() {
    super();
    this.attachShadow({ mode: 'open' });
  }

  connectedCallback() {
    this.shadowRoot.innerHTML = `
      <style>
        ${controls}
        :host { display: flex; align-items: center; gap: 2px; height: 17px; padding: 0 20px 0 1px; background: #e2e3e5; color: #444; white-space: pre; }
        .coords { width: 146px; }
        .height { width: 45px; }
        .level { width: 73px; }
        .count { width: 55px; }
        .hidden { width: 56px; }
        button { display: flex; align-items: center; justify-content: center; height: 13px; padding: 0 3px; border: 1px solid #b9bbbf; background: #d8dadd; --icon: 10px; }
        button[aria-label] { gap: 2px; padding: 0 1px; }
        button.on { background: #fff; border-color: #62a3e2; }
        .caret { --icon: 4px; }
        .hint { flex: 1; padding-left: 1px; }
      </style>
      <span class="coords">X = 73147 Y = -107718 Z = 62573</span>
      <span class="height">层高:   1.6</span>
      <span class="level">标高:   -1.6~0</span>
      <span class="count">0</span>
      <span class="hidden">隐藏:  0</span>
      <button aria-label="正交"><gt-icon name="corner"></gt-icon></button>
      <button aria-label="捕捉" class="on"><gt-icon name="snaprect"></gt-icon>${caret}</button>
      <button aria-label="交点"><gt-icon name="cross"></gt-icon></button>
      <button aria-label="角度"><gt-icon name="angle"></gt-icon>${caret}</button>
      <button aria-label="偏移"><gt-icon name="plusbar"></gt-icon>${caret}</button>
      <button>跨图层选择</button>
      <button>折线选择</button>
      <span class="hint">指定第一点</span>
      <span>500 FPS</span>
    `;
  }
}
customElements.define('gt-status-bar', GtStatusBar);

class GtTaskbar extends HTMLElement {
  constructor() {
    super();
    this.attachShadow({ mode: 'open' });
  }

  connectedCallback() {
    const left = ['windows', 'finder', 'cortana', 'taskview', 'fan'];
    const apps = ['edge', 'map', 'sogou', 'logo', 'dia', 'snow'];
    this.shadowRoot.innerHTML = `
      <style>
        ${controls}
        :host { display: flex; height: 23px; background: #1e1f21; color: #fff; }
        button { display: grid; place-items: center; width: 27px; --icon: 11px; }
        .find { display: flex; align-items: center; gap: 3px; width: 84px; height: 19px; margin: 1px 0 0 1px; padding-left: 2px; background: #f3f3f3; color: #222; --icon: 11px; }
        .find input { flex: 1; min-width: 0; }
        .go { width: 30px; height: 19px; margin-top: 1px; background: #2386f0; margin-right: 2px; }
        .app { width: 28px; border: solid transparent; border-width: 0 3px; background: linear-gradient(#76b9ed, #76b9ed) bottom / 100% 1px no-repeat; background-origin: padding-box; background-clip: padding-box; --icon: 14px; }
        .app.on { background-color: #45484d; border-width: 0; }
        .tray { display: flex; align-items: center; gap: 4px; margin-left: auto; --icon: 9px; }
        .tray > span { font-size: 8px; }
        .clock { width: 43px; text-align: center; }
        .note { display: flex; align-items: end; margin: 0 12px 0 6px; --icon: 11px; }
        .note span { width: 8px; height: 8px; margin: 4px 0 0 -4px; border-radius: 50%; background: #555; line-height: 8px; text-align: center; }
      </style>
      ${left.map(n => `<button aria-label="${n}"><gt-icon name="${n}"></gt-icon></button>`).join('')}
      <div class="find"><gt-icon name="ie"></gt-icon><input aria-label="搜索" value="哈登为莫雷道歉"></div>
      <button class="go">搜一下</button>
      ${apps.map(n => `<button class="app ${n === 'logo' ? 'on' : ''}" aria-label="${n}"><gt-icon name="${n}"></gt-icon></button>`).join('')}
      <div class="tray">
        <gt-icon name="up"></gt-icon><gt-icon name="guard"></gt-icon><gt-icon name="battery"></gt-icon>
        <gt-icon name="wifi"></gt-icon><gt-icon name="sound"></gt-icon><span>中</span>
        <div class="clock">22:33<br>2019/11/10</div>
        <div class="note"><gt-icon name="notice"></gt-icon><span>2</span></div>
      </div>
    `;
  }
}
customElements.define('gt-taskbar', GtTaskbar);

class GtApp extends HTMLElement {
  constructor() {
    super();
    this.attachShadow({ mode: 'open' });
  }

  connectedCallback() {
    this.shadowRoot.innerHTML = `
      <style>
        :host { display: flex; flex-direction: column; height: 100vh; }
        main { flex: 1; min-height: 0; display: grid; grid-template: minmax(0, 1fr) / 116px 161px minmax(0, 1fr) 159px; column-gap: 3px; background: #dcdee2; }
        .dock { display: flex; flex-direction: column; gap: 2px; min-height: 0; }
        .dock gt-panel:last-child { flex: 1; }
        .stage { display: grid; position: relative; min-width: 0; min-height: 0; }
        /* grips of the two side docks */
        .stage::before, .stage::after { content: ""; position: absolute; top: calc(50% - 28px); width: 3px; height: 56px; background: #5d6066; }
        .stage::before { left: -3px; }
        .stage::after { right: -3px; }
      </style>
      <gt-header></gt-header>
      <gt-ribbon></gt-ribbon>
      <gt-options-bar></gt-options-bar>
      <main>
        <gt-nav-tree></gt-nav-tree>
        <div class="dock">
          <gt-panel tabs="构件列表,图纸管理" on="0"><gt-component-list></gt-component-list></gt-panel>
          <gt-panel tabs="属性列表,图层管理" on="1"><gt-layer-list></gt-layer-list></gt-panel>
        </div>
        <div class="stage"><gt-model-view></gt-model-view></div>
        <gt-panel heading="显示设置" tabs="图元显示,楼层显示" on="1"><gt-display-settings></gt-display-settings></gt-panel>
      </main>
      <gt-status-bar></gt-status-bar>
      <gt-taskbar></gt-taskbar>
    `;
  }
}
customElements.define('gt-app', GtApp);
</script>
</body>
</html>
